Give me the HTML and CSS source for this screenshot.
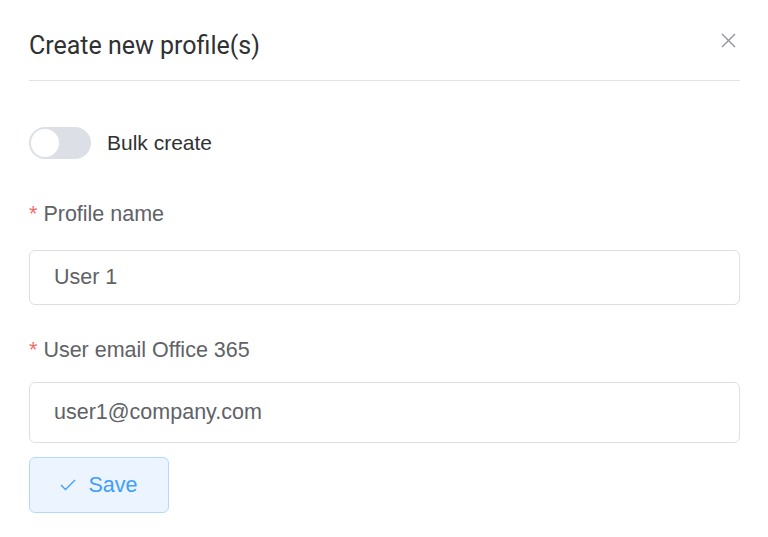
FILE: index.html
```html
<!DOCTYPE html>
<html lang="en">
<head>
<meta charset="UTF-8">
<meta name="viewport" content="width=device-width, initial-scale=1.0">
<title>Create new profile(s)</title>
<link rel="stylesheet" href="styles.css">
</head>
<body>

<!-- Dialog -->
<div class="dialog">
  <div class="dialog-header">
    <h2 class="dialog-title">Create new profile(s)</h2>
    <button class="close-btn" aria-label="Close">
      <svg width="15" height="15" viewBox="0 0 15 15"><path d="M1 1L14 14M14 1L1 14" stroke="#909399" stroke-width="1.4" fill="none"/></svg>
    </button>
  </div>

  <div class="switch-row">
    <span class="switch"><span class="switch-knob"></span></span>
    <span class="switch-label">Bulk create</span>
  </div>

  <label class="field-label label-first"><span class="required">*</span>Profile name</label>
  <div class="input input-name">User 1</div>

  <label class="field-label label-second"><span class="required">*</span>User email Office 365</label>
  <div class="input input-email">user1@company.com</div>

  <button class="save-btn">
    <svg width="16" height="12" viewBox="0 0 16 12"><path d="M1 6L5.5 10.5L15 1" stroke="#409eff" stroke-width="1.4" fill="none"/></svg>
    <span>Save</span>
  </button>
</div>

</body>
</html>
```

FILE: styles.css
```css
/* Page */
body {
  margin: 0;
  padding: 0;
  background: #fff;
  font-family: "Liberation Sans", Arial, sans-serif;
  color: #606266;
}
.dialog {
  width: 711px;
  padding: 0 28px 0 29px;
}
/* Header */
.dialog-header {
  display: flex;
  justify-content: space-between;
  align-items: flex-start;
  height: 81px;
  box-sizing: border-box;
  padding-top: 28px;
  border-bottom: 1px solid #e2e3ea;
}
.dialog-title {
  margin: 0;
  font-family: Roboto, sans-serif;
  font-weight: 400;
  font-size: 25px;
  line-height: 36px;
  color: #303133;
}
.close-btn {
  margin: 5px 4px 0 0;
  padding: 0;
  border: none;
  background: none;
  width: 15px;
  height: 15px;
  cursor: pointer;
  display: block;
}
.close-btn svg {
  display: block;
}
/* Switch */
.switch-row {
  display: flex;
  align-items: center;
  margin-top: 46px;
  height: 32px;
}
.switch {
  position: relative;
  width: 62px;
  height: 32px;
  border-radius: 16px;
  background: #dcdfe6;
  margin-right: 16px;
}
.switch-knob {
  position: absolute;
  top: 2px;
  left: 2px;
  width: 28px;
  height: 28px;
  border-radius: 50%;
  background: #fff;
}
.switch-label {
  font-size: 21px;
  color: #303133;
}
/* Fields */
.field-label {
  display: block;
  font-size: 21.5px;
  line-height: 24px;
  color: #606266;
}
.label-first {
  margin-top: 43px;
  margin-bottom: 24px;
}
.label-second {
  margin-top: 33px;
  margin-bottom: 20px;
}
.required {
  color: #f56c6c;
  margin-right: 6px;
}
.input {
  box-sizing: border-box;
  border: 1px solid #dcdfe6;
  border-radius: 6px;
  padding-left: 24px;
  font-size: 21.5px;
  color: #606266;
  display: flex;
  align-items: center;
}
.input-name {
  height: 55px;
}
.input-email {
  height: 61px;
}
/* Save button */
.save-btn {
  margin-top: 14px;
  width: 140px;
  height: 56px;
  box-sizing: border-box;
  display: flex;
  align-items: center;
  justify-content: center;
  gap: 12px;
  background: #ecf5ff;
  border: 1px solid #b3d8ff;
  border-radius: 6px;
  color: #409eff;
  font-family: "Liberation Sans", Arial, sans-serif;
  font-size: 21.5px;
  cursor: pointer;
}
.save-btn svg {
  display: block;
}
```
